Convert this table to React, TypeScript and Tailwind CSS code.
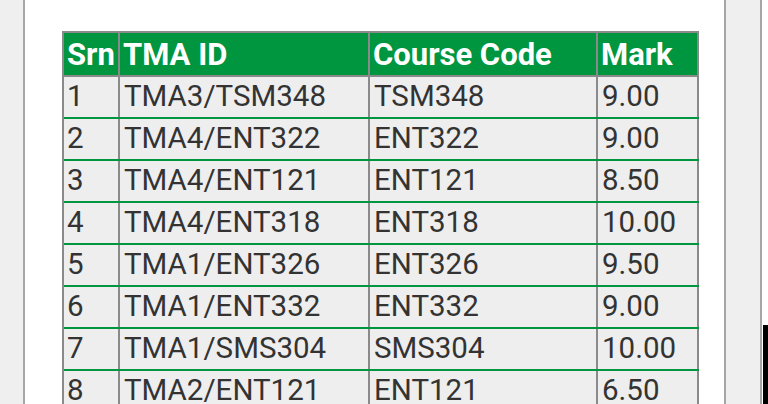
import React from "react";

const rows = [
  ["1", "TMA3/TSM348", "TSM348", "9.00"],
  ["2", "TMA4/ENT322", "ENT322", "9.00"],
  ["3", "TMA4/ENT121", "ENT121", "8.50"],
  ["4", "TMA4/ENT318", "ENT318", "10.00"],
  ["5", "TMA1/ENT326", "ENT326", "9.50"],
  ["6", "TMA1/ENT332", "ENT332", "9.00"],
  ["7", "TMA1/SMS304", "SMS304", "10.00"],
  ["8", "TMA2/ENT121", "ENT121", "6.50"],
];

const widths = ["w-[56px]", "w-[250px]", "w-[228px]", "w-[101px]"];

export default function App() {
  return (
    <div
      className="flex h-[404px] w-[768px] overflow-hidden bg-[#efefef]"
      style={{ fontFamily: "Roboto, 'Noto Sans', sans-serif" }}
    >
      <div className="w-[23px] shrink-0" />
      <div className="flex w-[703px] shrink-0 flex-col border-x-2 border-[#a6a6a6] bg-white pl-[37px] pt-[31px]">
        <div className="w-[637px] border-l-2 border-[#8a8a8a]">
          <div className="flex h-[46px] border-y-2 border-[#8a8a8a] bg-[#00963f] text-[31px] font-bold leading-none text-white">
            {["Srn", "TMA ID", "Course Code", "Mark"].map((h, i) => (
              <div
                key={h}
                className={`${widths[i]} flex shrink-0 items-center border-r-2 border-[#8a8a8a] pl-[3px]`}
              >
                {h}
              </div>
            ))}
          </div>
          {rows.map((r) => (
            <div
              key={r[0]}
              className="flex h-[42px] border-b-2 border-[#00963f] bg-[#eeeeee] text-[29.5px] leading-none text-[#333333]"
            >
              {r.map((c, i) => (
                <div
                  key={i}
                  className={`${widths[i]} flex shrink-0 items-center border-r-2 border-[#8a8a8a] ${i === 0 ? "pl-[3px]" : "pl-[4px]"}`}
                >
                  {c}
                </div>
              ))}
            </div>
          ))}
        </div>
      </div>
      <div className="w-[34px] shrink-0" />
      <div className="flex w-[8px] shrink-0 border-l-2 border-[#a6a6a6] bg-white">
        <div className="flex w-full flex-col pl-px">
          <div className="h-[325px] shrink-0" />
          <div className="flex-1 bg-black" />
        </div>
      </div>
    </div>
  );
}
